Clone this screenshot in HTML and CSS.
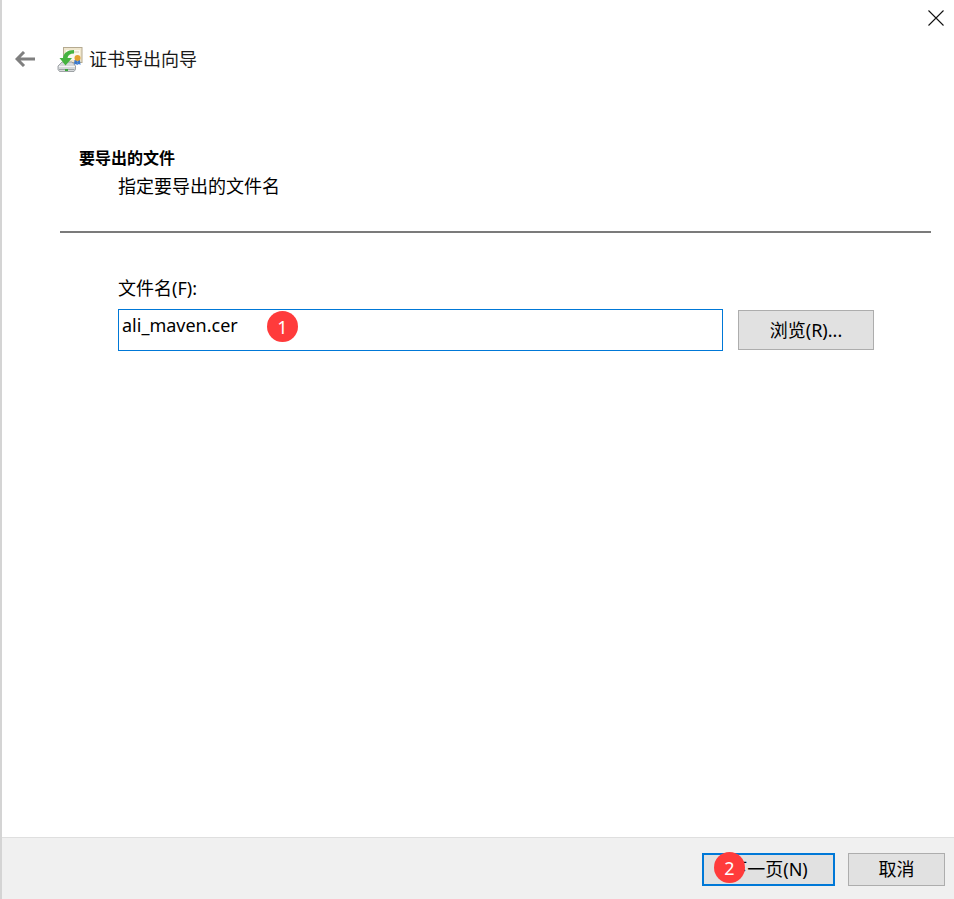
FILE: index.html
```html
<!DOCTYPE html>
<html lang="zh-CN">
<head>
    <meta charset="UTF-8">
    <meta name="viewport" content="width=device-width, initial-scale=1.0">
    <title>证书导出向导</title>
    <link rel="stylesheet" href="styles.css">
</head>
<body>
    <div class="wizard">
        <div class="close-row">
            <svg class="close-icon" width="16" height="16" viewBox="0 0 16 16">
                <path d="M0.5 0.5L15.5 15.5M15.5 0.5L0.5 15.5" stroke="#111" stroke-width="1.1" fill="none"/>
            </svg>
        </div>
        <div class="title-row">
            <svg class="back-icon" width="20" height="16" viewBox="0 0 20 16">
                <path d="M9 1L2 8L9 15M2 8H20" stroke="#7f7f7f" stroke-width="3" fill="none"/>
            </svg>
            <svg class="cert-icon" width="26" height="26" viewBox="0 0 26 26">
                <rect x="6.500" y="1.500" width="18.500" height="15" fill="#efe6cd" stroke="#b5aa90"/>
                <rect x="9" y="4" width="14" height="10" fill="#fbf8ee"/>
                <path d="M15 6H22" stroke="#d8cfb6"/>
                <path d="M17.500 14L17 19L19 18L20 19V14Z" fill="#3b78cc"/>
                <path d="M20.500 14L20 19L22 18L23.500 19L23 14Z" fill="#3b78cc"/>
                <circle cx="20.500" cy="12" r="3" fill="#e3a12f"/>
                <path d="M1 20L5 16H15L18.500 20V23.500L17 25.500H2.500L1 23.500Z" fill="#d5d8da" stroke="#8c9194" stroke-width="0.800"/>
                <path d="M2 20.500H18" stroke="#f4f5f5"/>
                <path d="M2 23.500H17.500" stroke="#9ea3a6"/>
                <rect x="8" y="23" width="3" height="2" fill="#39a83a"/>
                <path d="M17 7.500C13 7.500 11 9 10.500 12H15L8.500 19.500L2.500 12H6C6.500 7 10.500 4 17 4Z" fill="#46b340"/>
            </svg>
            <span class="wizard-title">证书导出向导</span>
        </div>
        <div class="header-block">
            <div class="page-heading">要导出的文件</div>
            <div class="page-sub">指定要导出的文件名</div>
        </div>
        <hr class="divider">
        <div class="form-block">
            <label class="file-label" for="fileName">文件名(F):</label>
            <div class="file-row">
                <div class="file-field">
                    <input class="file-input" id="fileName" type="text" value="ali_maven.cer">
                    <span class="badge badge-one">1</span>
                </div>
                <button class="btn browse-btn" type="button">浏览(R)...</button>
            </div>
        </div>
        <div class="footer">
            <div class="next-wrap">
                <button class="btn next-btn" type="button">下一页(N)</button>
                <span class="badge badge-two">2</span>
            </div>
            <button class="btn cancel-btn" type="button">取消</button>
        </div>
    </div>
</body>
</html>
```

FILE: styles.css
```css
* {
    box-sizing: border-box;
}
html, body {
    height: 100%;
}
body {
    margin: 0;
    background: #fff;
    color: #000;
    font-family: "Noto Sans", "Noto Sans CJK SC", sans-serif;
    font-size: 18px;
    overflow: hidden;
}
.wizard {
    display: flex;
    flex-direction: column;
    height: 899px;
    border-left: 2px solid #d4d4d4;
}
.close-row {
    display: flex;
    justify-content: flex-end;
    height: 41px;
    padding: 10px 10px 0 0;
}
.title-row {
    display: flex;
    align-items: center;
    height: 36px;
    padding-left: 13px;
}
.back-icon {
    margin-right: 22px;
}
.cert-icon {
    margin-right: 6px;
}
.wizard-title {
    line-height: 24px;
    color: #1a1a1a;
}
.header-block {
    margin-top: 69px;
    padding-left: 77px;
}
.page-heading {
    font-size: 16px;
    font-weight: bold;
    line-height: 24px;
}
.page-sub {
    padding-left: 39px;
    margin-top: 3px;
    line-height: 26px;
}
.divider {
    height: 2px;
    margin: 32px 23px 0 58px;
    border: 0;
    background: #7b7b7b;
}
.form-block {
    padding: 42px 80px 0 116px;
}
.file-label {
    display: block;
    line-height: 26px;
    margin-bottom: 8px;
}
.file-row {
    display: flex;
    align-items: center;
    gap: 15px;
}
.file-field {
    position: relative;
    width: 605px;
}
.file-input {
    display: block;
    width: 100%;
    height: 42px;
    padding: 0 3px 10px;
    border: 1px solid #0078d7;
    outline: none;
    font: inherit;
    color: #000;
}
.btn {
    border: 1px solid #adadad;
    border-radius: 0;
    background: #e1e1e1;
    font: inherit;
    color: #000;
    padding: 0 0 3px;
}
.browse-btn {
    width: 136px;
    height: 40px;
}
.footer {
    display: flex;
    justify-content: flex-end;
    align-items: flex-start;
    gap: 13px;
    height: 62px;
    margin-top: auto;
    padding: 15px 9px 0 0;
    background: #f0f0f0;
    border-top: 1px solid #dfdfdf;
}
.next-wrap {
    position: relative;
}
.next-btn {
    display: block;
    width: 133px;
    height: 33px;
    border: 2px solid #0078d7;
}
.cancel-btn {
    width: 97px;
    height: 33px;
}
.badge {
    position: absolute;
    display: flex;
    align-items: center;
    justify-content: center;
    width: 31px;
    height: 31px;
    border-radius: 50%;
    background: #ff3b3b;
    color: #fff;
    font-size: 18px;
}
.badge-one {
    left: 149px;
    top: 2px;
}
.badge-two {
    left: 12px;
    top: -1px;
}
```
